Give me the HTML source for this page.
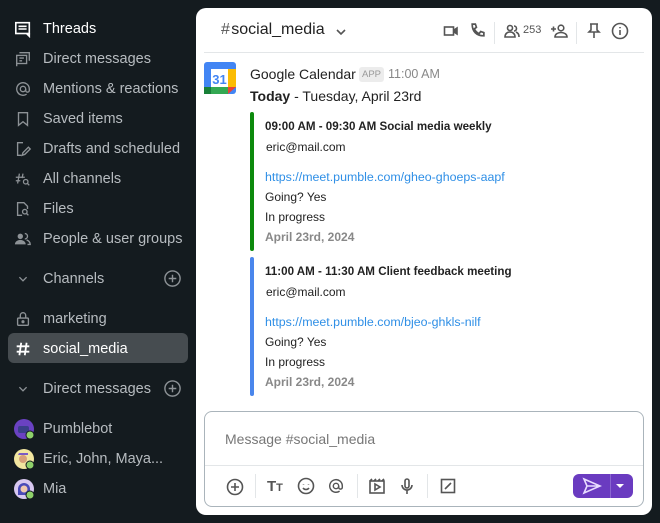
<!DOCTYPE html>
<html><head><meta charset="utf-8">
<style>
*{box-sizing:border-box;margin:0;padding:0}
body{width:660px;height:523px;background:#141b1f;font-family:"Liberation Sans",sans-serif;position:relative;overflow:hidden}
.it{position:absolute;left:14px;height:30px;display:flex;align-items:center;color:#b7bcc0;font-size:14.5px;margin-top:1px}
.it svg{width:18px;height:18px;margin-right:11px;flex:none}
.sel{position:absolute;left:8px;top:333px;width:180px;height:30px;background:#464c50;border-radius:6px}
.main{position:absolute;left:196px;top:8px;width:456px;height:507px;background:#fff;border-radius:10px;overflow:hidden}
.hdr{position:absolute;left:8px;right:8px;top:0;height:45px;border-bottom:1px solid #e3e6e8}
.t{position:absolute;color:#222;font-size:12px;white-space:nowrap}
.b{font-weight:bold}
.ev{font-size:11.6px}
.lnk{color:#2f8fe6;font-size:12.4px}
.gr{color:#888}
svg.i{position:absolute;fill:none;stroke:#555;stroke-width:1.6}
</style></head><body>
<div class="sel"></div>
<div class="it" style="top:13px;color:#fff"><svg viewBox="0 0 20 20" fill="none" stroke="#fff" stroke-width="1.8"><rect x="2" y="3" width="15" height="12"/><path d="M5 7h9M5 10h9M17 15v3l-3-3"/></svg>Threads</div>
<div class="it" style="top:43px"><svg viewBox="0 0 20 20" fill="none" stroke="#8d9296" stroke-width="1.5"><rect x="3" y="6" width="11" height="9"/><path d="M6 3h11v9M6 9h5M6 12h3M3 15v3"/></svg>Direct messages</div>
<div class="it" style="top:73px"><svg viewBox="0 0 20 20" fill="none" stroke="#8d9296" stroke-width="1.5"><circle cx="10" cy="10" r="3"/><path d="M13 10v1.5a2 2 0 004 0V10a7 7 0 10-3 5.7"/></svg>Mentions &amp; reactions</div>
<div class="it" style="top:103px"><svg viewBox="0 0 20 20" fill="none" stroke="#8d9296" stroke-width="1.5"><path d="M5 3h10v14l-5-4-5 4z"/></svg>Saved items</div>
<div class="it" style="top:133px"><svg viewBox="0 0 20 20" fill="none" stroke="#8d9296" stroke-width="1.5"><path d="M10 3H4v14h4M16 8l-6 6-1 3 3-1 6-6z"/></svg>Drafts and scheduled</div>
<div class="it" style="top:163px"><svg viewBox="0 0 20 20" fill="none" stroke="#8d9296" stroke-width="1.4"><path d="M6 4l-2 11M10 4l-1 5M2 8h10M2 12h5"/><circle cx="13" cy="13" r="2.5"/><path d="M15 15l2 2"/></svg>All channels</div>
<div class="it" style="top:193px"><svg viewBox="0 0 20 20" fill="none" stroke="#8d9296" stroke-width="1.5"><path d="M9 17H4V3h7l4 4v3"/><circle cx="12" cy="13" r="2.5"/><path d="M14 15l2 2"/></svg>Files</div>
<div class="it" style="top:223px"><svg viewBox="0 0 20 20" fill="#8d9296"><circle cx="7" cy="7" r="3"/><path d="M1 16c0-3 3-5 6-5s6 2 6 5z"/><path d="M12 4a3 3 0 010 6M14 11c2 1 4 2 4 5h-3" fill="none" stroke="#8d9296" stroke-width="1.5"/></svg>People &amp; user groups</div>
<div class="it" style="top:263px"><svg viewBox="0 0 20 20" fill="none" stroke="#8d9296" stroke-width="1.5"><path d="M6 8l4 4 4-4"/></svg>Channels</div>
<svg style="position:absolute;left:163px;top:269px" width="19" height="19" viewBox="0 0 20 20" fill="none" stroke="#8d9296" stroke-width="1.5"><circle cx="10" cy="10" r="8"/><path d="M10 6v8M6 10h8"/></svg>
<div class="it" style="top:303px"><svg viewBox="0 0 20 20" fill="none" stroke="#8d9296" stroke-width="1.5"><rect x="4" y="9" width="12" height="8" rx="1"/><path d="M7 9V6a3 3 0 016 0v3"/><circle cx="10" cy="13" r="1" fill="#8d9296"/></svg>marketing</div>
<div class="it" style="top:333px;color:#fff"><svg viewBox="0 0 20 20" fill="none" stroke="#fff" stroke-width="2"><path d="M8 3L6 17M14 3l-2 14M3 7h14M3 13h14"/></svg>social_media</div>
<div class="it" style="top:373px"><svg viewBox="0 0 20 20" fill="none" stroke="#8d9296" stroke-width="1.5"><path d="M6 8l4 4 4-4"/></svg>Direct messages</div>
<svg style="position:absolute;left:163px;top:379px" width="19" height="19" viewBox="0 0 20 20" fill="none" stroke="#8d9296" stroke-width="1.5"><circle cx="10" cy="10" r="8"/><path d="M10 6v8M6 10h8"/></svg>
<div class="it" style="top:413px"><svg viewBox="0 0 20 20" style="width:20px;height:20px;margin-right:9px"><circle cx="10" cy="10" r="10" fill="#6a42c2"/><rect x="4" y="7" width="11" height="7" rx="2" fill="#3a3f8a"/><circle cx="16" cy="16" r="4" fill="#8fd16a" stroke="#141b1f" stroke-width="1"/></svg>Pumblebot</div>
<div class="it" style="top:443px"><svg viewBox="0 0 20 20" style="width:20px;height:20px;margin-right:9px"><circle cx="10" cy="10" r="10" fill="#f2e6a0"/><path d="M4 6h10v-2H5z" fill="#7a5bc5"/><circle cx="9" cy="10" r="4" fill="#d8a07a"/><circle cx="16" cy="16" r="4" fill="#8fd16a" stroke="#141b1f" stroke-width="1"/></svg>Eric, John, Maya...</div>
<div class="it" style="top:473px"><svg viewBox="0 0 20 20" style="width:20px;height:20px;margin-right:9px"><circle cx="10" cy="10" r="10" fill="#d8c8f0"/><path d="M4 10a6 6 0 0112 0v6H4z" fill="#4a4ab8"/><circle cx="10" cy="10" r="3.5" fill="#f0c8b0"/><circle cx="16" cy="16" r="4" fill="#8fd16a" stroke="#141b1f" stroke-width="1"/></svg>Mia</div>

<div class="main">
 <div class="hdr"></div>
 <div class="t" style="left:25px;top:13px;font-size:16px;color:#222"><span style="color:#555">#</span>&#8202;social_media</div>
 <svg class="i" style="left:138px;top:17px" width="14" height="14" viewBox="0 0 14 14"><path d="M3 5l4 4 4-4"/></svg>
 <svg class="i" style="left:247px;top:15px" width="16" height="16" viewBox="0 0 16 16"><rect x="1.5" y="4" width="9" height="8"/><path d="M11 7l3-2v6l-3-2" fill="#555"/></svg>
 <svg class="i" style="left:273px;top:14px" width="17" height="17" viewBox="0 0 16 16"><path d="M3 2l3 0 1 3-2 1.5a9 9 0 004.5 4.5l1.5-2 3 1v3c-7 0-11-4-11-11z"/></svg>
 <div style="position:absolute;left:298px;top:14px;width:1px;height:22px;background:#e3e6e8"></div>
 <svg class="i" style="left:308px;top:15px" width="16" height="16" viewBox="0 0 16 16"><circle cx="6" cy="5" r="2.5"/><path d="M1 14c0-3 2-5 5-5s5 2 5 5z M10 3a2.5 2.5 0 010 5M12 9c2 1 3 2 3 5"/></svg>
 <div class="t" style="left:327px;top:16px;font-size:11px;color:#555">253</div>
 <svg class="i" style="left:354px;top:14px" width="18" height="18" viewBox="0 0 18 18"><circle cx="11" cy="6" r="2.8"/><path d="M5 15c0-3 3-4.5 6-4.5s6 1.5 6 4.5z M1 7h5M3.5 4.5v5"/></svg>
 <div style="position:absolute;left:380px;top:14px;width:1px;height:22px;background:#e3e6e8"></div>
 <svg class="i" style="left:390px;top:14px" width="16" height="17" viewBox="0 0 16 17"><path d="M4 2h8M5 2v6l-2 2h10l-2-2V2M8 10v6"/></svg>
 <svg class="i" style="left:415px;top:14px" width="18" height="18" viewBox="0 0 18 18"><circle cx="9" cy="9" r="7.5"/><path d="M9 8v5M9 5v1.2"/></svg>

 <svg style="position:absolute;left:8px;top:54px" width="32" height="32" viewBox="0 0 32 32"><rect x="0" y="0" width="32" height="32" rx="3" fill="#4285f4"/><rect x="24" y="7" width="8" height="18" fill="#fbbc04"/><rect x="0" y="25" width="24" height="7" fill="#34a853"/><rect x="0" y="25" width="7" height="7" fill="#188038"/><path d="M24 25h8l-8 7z" fill="#ea4335"/><rect x="7" y="7" width="17" height="18" fill="#fff"/><text x="15.5" y="22" font-size="13" font-family="Liberation Sans" fill="#4285f4" text-anchor="middle" font-weight="bold">31</text></svg>
 <div class="t" style="left:54px;top:58px;font-size:14px">Google Calendar</div>
 <div class="t" style="left:163px;top:59px;font-size:9.5px;color:#999;background:#ececec;border-radius:3px;padding:2px 3px">APP</div>
 <div class="t" style="left:192px;top:59px;font-size:12.5px;color:#888">11:00 AM</div>
 <div class="t" style="left:54px;top:80px;font-size:14px"><b>Today</b> - Tuesday, April 23rd</div>

 <div style="position:absolute;left:54px;top:104px;width:4px;height:139px;background:#0d8a0d;border-radius:2px"></div>
 <div class="t b ev" style="left:69px;top:112px">09:00 AM - 09:30 AM Social media weekly</div>
 <div class="t" style="left:70px;top:132px">eric@mail.com</div>
 <div class="t lnk" style="left:69px;top:162px">https://meet.pumble.com/gheo-ghoeps-aapf</div>
 <div class="t" style="left:69px;top:182px">Going? Yes</div>
 <div class="t" style="left:69px;top:202px">In progress</div>
 <div class="t b gr" style="left:69px;top:222px">April 23rd, 2024</div>

 <div style="position:absolute;left:54px;top:249px;width:4px;height:139px;background:#4a86ec;border-radius:2px"></div>
 <div class="t b ev" style="left:69px;top:257px">11:00 AM - 11:30 AM Client feedback meeting</div>
 <div class="t" style="left:70px;top:277px">eric@mail.com</div>
 <div class="t lnk" style="left:69px;top:307px">https://meet.pumble.com/bjeo-ghkls-nilf</div>
 <div class="t" style="left:69px;top:327px">Going? Yes</div>
 <div class="t" style="left:69px;top:347px">In progress</div>
 <div class="t b gr" style="left:69px;top:367px">April 23rd, 2024</div>

 <div style="position:absolute;left:8px;top:403px;width:440px;height:96px;border:1px solid #aab4bb;border-radius:8px">
  <div style="position:absolute;left:0;right:0;top:53px;height:1px;background:#e3e6e8"></div>
 </div>
 <div class="t" style="left:29px;top:423px;font-size:14px;color:#777">Message #social_media</div>
 <svg class="i" style="left:30px;top:470px" width="18" height="18" viewBox="0 0 18 18"><circle cx="9" cy="9" r="7.5"/><path d="M9 5v8M5 9h8"/></svg>
 <div style="position:absolute;left:59px;top:466px;width:1px;height:24px;background:#e3e6e8"></div>
 <div class="t b" style="left:71px;top:470px;font-size:15px;color:#555">T<span style="font-size:11px">T</span></div>
 <svg class="i" style="left:101px;top:469px" width="18" height="18" viewBox="0 0 18 18"><circle cx="9" cy="9" r="7.5"/><path d="M6 11c1.5 2 4.5 2 6 0M6.5 7v.5M11.5 7v.5"/></svg>
 <svg class="i" style="left:131px;top:469px" width="18" height="18" viewBox="0 0 20 20"><circle cx="10" cy="10" r="3"/><path d="M13 10v1.5a2 2 0 004 0V10a7 7 0 10-3 5.7"/></svg>
 <div style="position:absolute;left:161px;top:466px;width:1px;height:24px;background:#e3e6e8"></div>
 <svg class="i" style="left:172px;top:469px" width="18" height="18" viewBox="0 0 18 18"><rect x="2" y="4" width="14" height="12"/><path d="M2 4l2-2M6 4l2-2M10 4l2-2M14 4l2-2M7 7v6l5-3z"/></svg>
 <svg class="i" style="left:202px;top:469px" width="18" height="18" viewBox="0 0 18 18"><rect x="7" y="2" width="4" height="9" rx="2"/><path d="M4 8a5 5 0 0010 0M9 13v4"/></svg>
 <div style="position:absolute;left:231px;top:466px;width:1px;height:24px;background:#e3e6e8"></div>
 <svg class="i" style="left:243px;top:469px" width="18" height="18" viewBox="0 0 18 18"><rect x="2.5" y="2.5" width="13" height="13"/><path d="M6 12l6-6"/></svg>
 <div style="position:absolute;left:377px;top:466px;width:60px;height:24px;background:#6a3bc0;border-radius:6px"></div>
 <div style="position:absolute;left:414px;top:466px;width:1px;height:24px;background:#8a66d0"></div>
 <svg style="position:absolute;left:386px;top:469px" width="20" height="18" viewBox="0 0 20 18" fill="none" stroke="#e8dcff" stroke-width="1.6"><path d="M2 2l16 7-16 7 3-7zM5 9h13"/></svg>
 <svg style="position:absolute;left:419px;top:475px" width="10" height="6" viewBox="0 0 10 6"><path d="M1 1h8L5 5z" fill="#fff"/></svg>
</div>
</body></html>
